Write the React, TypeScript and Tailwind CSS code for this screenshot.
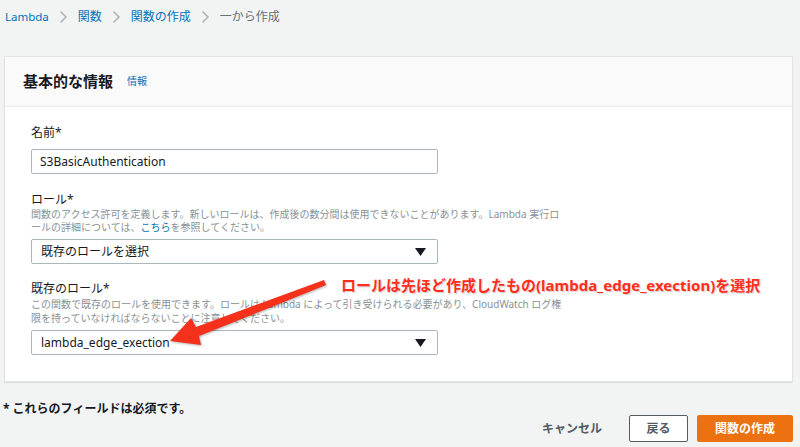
const font = "font-['Noto_Sans','Noto_Sans_CJK_JP',sans-serif]";

function Chevron() {
  return (
    <svg width="9" height="14" viewBox="0 0 9 14" className="mx-[10px]">
      <path d="M1.5 1.5 L7 7 L1.5 12.5" fill="none" stroke="#aab7b8" strokeWidth="1.6" />
    </svg>
  );
}

function Caret() {
  return (
    <svg width="11" height="8" viewBox="0 0 11 8">
      <path d="M0 0 H11 L5.5 8 Z" fill="#16191f" />
    </svg>
  );
}

function Select({ value }: { value: string }) {
  return (
    <div className="w-[407px] h-[25px] border border-[#aab7b8] rounded-[2px] bg-white flex items-center justify-between pl-[9px] pr-[11px] text-[12px] text-[#16191f]">
      <span>{value}</span>
      <Caret />
    </div>
  );
}

export default function App() {
  return (
    <div className={`relative w-[800px] h-[447px] bg-[#f2f3f3] overflow-hidden ${font}`}>
      <nav className="h-[33px] pl-[5px] flex items-center text-[12px]">
        <a className="text-[#0073bb] text-[11.5px]">Lambda</a>
        <Chevron />
        <a className="text-[#0073bb]">関数</a>
        <Chevron />
        <a className="text-[#0073bb]">関数の作成</a>
        <Chevron />
        <span className="text-[#687078]">一から作成</span>
      </nav>

      <div className="mt-[23px] ml-[4px] w-[789px] bg-white border border-[#e1e4e5] shadow-[0_1px_1px_rgba(0,0,0,0.08)]">
        <div className="h-[50px] bg-[#fafafa] border-b border-[#eaeded] flex items-center pl-[18px]">
          <h2 className="text-[15px] font-bold text-[#16191f]">基本的な情報</h2>
          <a className="ml-[14px] text-[10px] text-[#0073bb]">情報</a>
        </div>

        <div className="pl-[26px] pt-[18px] pb-[26px]">
          <div className="text-[12px] text-[#16191f] leading-[16px]">名前*</div>
          <div className="mt-[8px] w-[407px] h-[25px] border border-[#aab7b8] rounded-[2px] flex items-center pl-[8px] text-[12px] text-[#16191f]">
            S3BasicAuthentication
          </div>

          <div className="mt-[18px] text-[12px] text-[#16191f] leading-[16px]">ロール*</div>
          <p className="text-[10px] leading-[13px] text-[#879196]">
            関数のアクセス許可を定義します。新しいロールは、作成後の数分間は使用できないことがあります。Lambda 実行ロ
            <br />
            ールの詳細については、<span className="text-[#0073bb]">こちら</span>を参照してください。
          </p>
          <div className="mt-[5px]">
            <Select value="既存のロールを選択" />
          </div>

          <div className="mt-[17px] text-[12px] text-[#16191f] leading-[16px]">既存のロール*</div>
          <p className="text-[10px] leading-[14px] text-[#879196]">
            この関数で既存のロールを使用できます。ロールは Lambda によって引き受けられる必要があり、CloudWatch ログ権
            <br />
            限を持っていなければならないことに注意してください。
          </p>
          <div className="mt-[5px]">
            <Select value="lambda_edge_exection" />
          </div>
        </div>
      </div>

      <div className="pl-[3px] pt-[19px] text-[12px] font-bold text-[#16191f] leading-[16px]">
        * これらのフィールドは必須です。
      </div>
      <div className="flex justify-end items-center pr-[7px] -mt-[2px]">
        <button className="text-[12px] font-bold text-[#545b64] mr-[27px]">キャンセル</button>
        <button className="w-[59px] h-[27px] bg-white border border-[#545b64] rounded-[2px] text-[12px] font-bold text-[#545b64] mr-[9px]">
          戻る
        </button>
        <button className="w-[96px] h-[27px] bg-[#ec7211] border border-[#ec7211] rounded-[2px] text-[12px] font-bold text-white">
          関数の作成
        </button>
      </div>

      <div className="absolute left-[341px] top-[274px] text-[15px] font-bold text-[#ff2d1a] whitespace-nowrap [text-shadow:0_0_2px_#fff,1px_1px_1px_rgba(0,0,0,0.25)]">
        ロールは先ほど作成したもの(lambda_edge_exection)を選択
      </div>
      <svg className="absolute left-0 top-0 pointer-events-none" width="800" height="447">
        <polygon
          points="170,341 191,318 196,327 324,280 326,285 199,336 201,345"
          fill="#f5311c"
          style={{ filter: "drop-shadow(1px 1px 1px rgba(0,0,0,0.3))" }}
        />
      </svg>
    </div>
  );
}
